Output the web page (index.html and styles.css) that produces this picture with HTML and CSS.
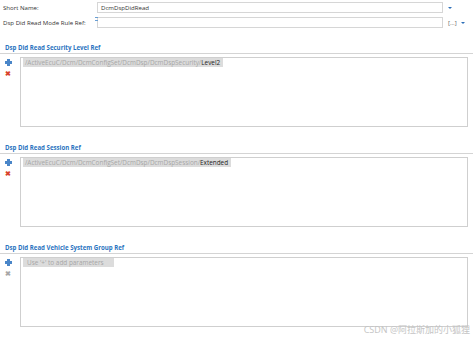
FILE: index.html
```html
<!DOCTYPE html>
<html lang="en">
<head>
    <meta charset="UTF-8">
    <title>Dsp Did Read</title>
    <link rel="stylesheet" href="styles.css">
</head>
<body>
    <!-- General fields -->
    <div class="fields">
        <div class="field-row">
            <label class="field-label">Short Name:</label>
            <div class="field-input">DcmDspDidRead</div>
            <div class="field-tools"><span class="arrow"></span></div>
        </div>
        <div class="field-row">
            <label class="field-label">Dsp Did Read Mode Rule Ref:</label>
            <div class="field-input has-marker"><span class="marker"></span></div>
            <div class="field-tools"><span class="dots">[...]</span><span class="arrow"></span></div>
        </div>
    </div>

    <!-- Reference sections -->
    <div class="section">
        <h2 class="section-title">Dsp Did Read Security Level Ref</h2>
        <div class="section-body">
            <div class="tool-column">
                <span class="icon-add"></span>
                <span class="icon-remove red">&#10006;</span>
            </div>
            <div class="ref-box">
                <div class="ref-item"><span class="ref-path">/ActiveEcuC/Dcm/DcmConfigSet/DcmDsp/DcmDspSecurity/</span>Level2</div>
            </div>
        </div>
    </div>

    <div class="section">
        <h2 class="section-title">Dsp Did Read Session Ref</h2>
        <div class="section-body">
            <div class="tool-column">
                <span class="icon-add"></span>
                <span class="icon-remove red">&#10006;</span>
            </div>
            <div class="ref-box">
                <div class="ref-item"><span class="ref-path">/ActiveEcuC/Dcm/DcmConfigSet/DcmDsp/DcmDspSession/</span>Extended</div>
            </div>
        </div>
    </div>

    <div class="section">
        <h2 class="section-title">Dsp Did Read Vehicle System Group Ref</h2>
        <div class="section-body">
            <div class="tool-column">
                <span class="icon-add"></span>
                <span class="icon-remove">&#10006;</span>
            </div>
            <div class="ref-box">
                <div class="ref-item empty">Use '+' to add parameters</div>
            </div>
        </div>
    </div>

    <div class="watermark">CSDN @阿拉斯加的小狐狸</div>
</body>
</html>
```

FILE: styles.css
```css
/* General Styles */
body {
    font-family: 'Open Sans', 'Noto Sans CJK SC', sans-serif;
    font-size: 6.1px;
    color: #333;
    margin: 0;
    padding: 0;
    background-color: #fff;
    width: 474px;
    height: 338px;
    overflow: hidden;
    position: relative;
}

.fields {
    padding-top: 2px;
}

.field-row {
    display: flex;
    align-items: center;
    height: 11px;
    margin-bottom: 4px;
}

.field-label {
    width: 94px;
    padding-left: 3px;
    line-height: 11px;
}

.field-input {
    width: 346px;
    height: 11px;
    box-sizing: border-box;
    border: 1px solid #d6d6d6;
    padding-left: 3px;
    line-height: 9px;
    position: relative;
}

.marker {
    position: absolute;
    left: -3px;
    top: -1px;
    width: 2px;
    height: 2px;
    border-top: 1px dotted #6a9fd4;
    border-bottom: 1px dotted #6a9fd4;
}

.field-tools {
    display: flex;
    align-items: center;
    padding-left: 5px;
    gap: 4px;
}

.dots {
    color: #666;
    font-size: 6px;
}

.arrow {
    width: 0;
    height: 0;
    border-left: 2px solid transparent;
    border-right: 2px solid transparent;
    border-top: 2px solid #2d6fb8;
}

.section {
    margin-top: 14px;
}

.section + .section {
    margin-top: 15px;
}

.section-title {
    margin: 0;
    font-size: 6.1px;
    font-weight: 700;
    color: #2a73c0;
    line-height: 11px;
    padding-left: 5px;
    border-bottom: 1px solid #d4d4d4;
    margin-right: 1px;
}

.section-body {
    display: flex;
    margin-top: 3px;
}

.tool-column {
    width: 20px;
    display: flex;
    flex-direction: column;
    align-items: center;
    padding-top: 2px;
    gap: 4px;
    box-sizing: border-box;
    padding-right: 4px;
}

.icon-add {
    width: 7px;
    height: 7px;
    background:
        linear-gradient(#4a86c8, #4a86c8) center / 7px 3px no-repeat,
        linear-gradient(#4a86c8, #4a86c8) center / 3px 7px no-repeat;
}

.icon-remove {
    font-size: 7px;
    line-height: 7px;
    color: #a8a8a8;
    font-weight: 700;
}

.icon-remove.red {
    color: #d8442c;
}

.ref-box {
    width: 448px;
    height: 70px;
    box-sizing: border-box;
    border: 1px solid #cfcfcf;
    padding-left: 2px;
}

.ref-item {
    display: inline-block;
    background-color: #dcdcdc;
    color: #222;
    font-size: 6.4px;
    line-height: 9px;
    padding: 0 3px 0 2px;
}

.ref-path {
    color: #a6a6a6;
}

.ref-item.empty {
    color: #a6a6a6;
    width: 84px;
    padding-left: 4px;
}

.watermark {
    position: absolute;
    right: 4px;
    bottom: 2px;
    font-size: 9px;
    color: #c4c4c4;
}
```
